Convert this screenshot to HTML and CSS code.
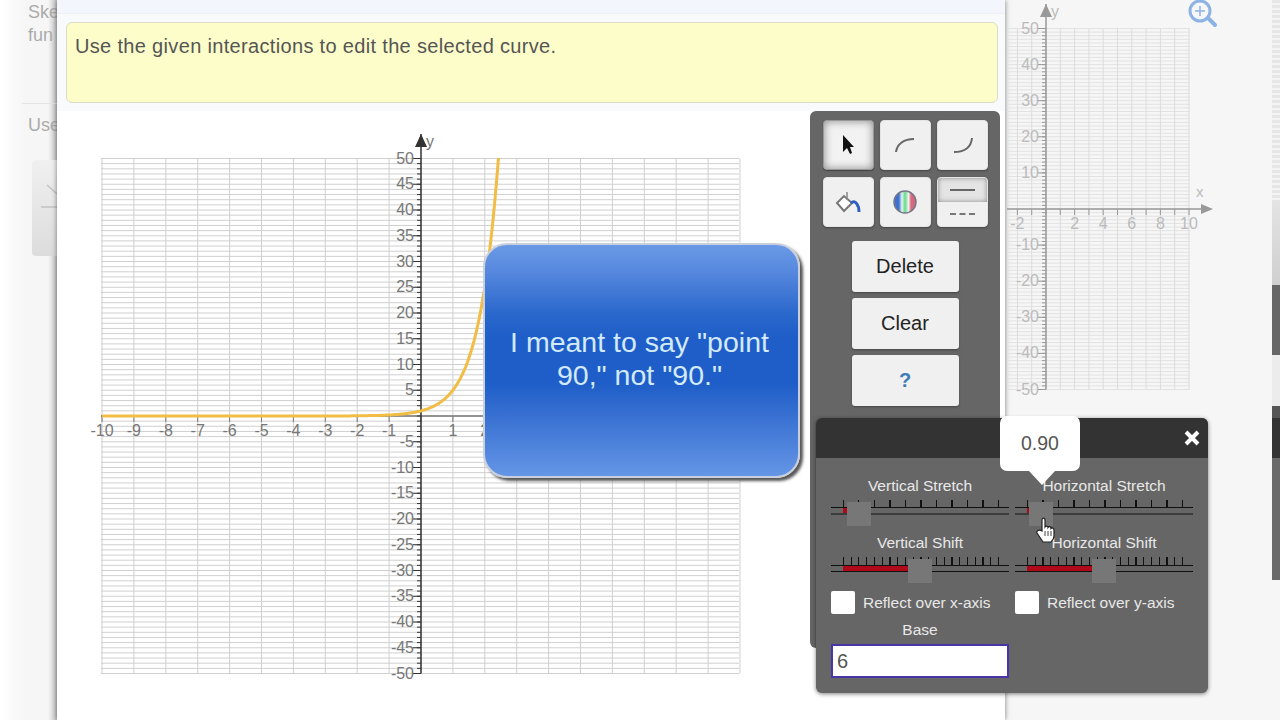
FILE: index.html
```html
<html>
    <head>
        <meta charset="utf-8">
        <link rel="stylesheet" href="styles.css">
    </head>
    <body>
        <div class="page">
            <div class="left_col">
                <p class="left_txt">Ske<br>fun</p>
                <div class="left_rule"></div>
                <p class="left_use">Use</p>
                <div class="left_box">
                    <svg width="25" height="96" viewBox="0 0 25 96"><path d="M15 25 L25 34 M9 47 H25" stroke="#c4c4c4" stroke-width="1.5" fill="none"/></svg>
                </div>
            </div>

            <div class="modal">
                <div class="modal_head">
                    <div class="notice">Use the given interactions to edit the selected curve.</div>
                </div>
                <div class="workspace">
                    <svg id="mainGraph" class="graph" width="753" height="609" viewBox="57 111 753 609"></svg>
                    <div class="toolbar">
                        <div class="tools">
                            <div class="tool selected">
                                <svg width="49" height="48" viewBox="0 0 49 48"><path d="M19 14 L19 31 L23 27 L26 33 L28 32 L26 26 L30 26 Z" fill="#111"/></svg>
                            </div>
                            <div class="tool">
                                <svg width="49" height="48" viewBox="0 0 49 48"><path d="M15 31 C16 23 23 18 33 18" fill="none" stroke="#666" stroke-width="2"/></svg>
                            </div>
                            <div class="tool">
                                <svg width="49" height="48" viewBox="0 0 49 48"><path d="M16 31 C26 31 33 27 34 17" fill="none" stroke="#666" stroke-width="2"/></svg>
                            </div>
                            <div class="tool">
                                <svg width="49" height="48" viewBox="0 0 49 48">
                                    <path d="M13 25 L20 18 L28 25 L20 33 Z" fill="#fff" stroke="#777" stroke-width="2"/>
                                    <path d="M23 14 L23 22" stroke="#888" stroke-width="1.5"/>
                                    <path d="M27 25 C31 21 35 27 35 34" fill="none" stroke="#2f5fc0" stroke-width="3"/>
                                </svg>
                            </div>
                            <div class="tool">
                                <svg width="49" height="48" viewBox="0 0 49 48">
                                    <defs>
                                        <linearGradient id="wheel">
                                            <stop offset="0.22" stop-color="#3f6fd0"/>
                                            <stop offset="0.36" stop-color="#e8f2f0"/>
                                            <stop offset="0.5" stop-color="#62dc8a"/>
                                            <stop offset="0.66" stop-color="#eef2ee"/>
                                            <stop offset="0.78" stop-color="#d8667c"/>
                                        </linearGradient>
                                    </defs>
                                    <circle cx="24" cy="24" r="11" fill="url(#wheel)" stroke="#778" stroke-width="1.5"/>
                                </svg>
                            </div>
                            <div class="tool line_tool">
                                <div class="line_solid"><span></span></div>
                                <div class="line_dash"><span></span></div>
                            </div>
                        </div>
                        <div class="actions">
                            <div class="action">Delete</div>
                            <div class="action">Clear</div>
                            <div class="action help">?</div>
                        </div>
                    </div>
                </div>
            </div>

            <div class="right_col">
                <svg id="sideGraph" class="side_graph" width="267" height="400" viewBox="1005 0 267 400"></svg>
                <svg class="zoom_icon" width="32" height="30" viewBox="0 0 32 30">
                    <circle cx="13" cy="11" r="10" fill="#f5f7fb" stroke="#8db2e4" stroke-width="3"/>
                    <path d="M8 11 H18 M13 6 V16" stroke="#8db2e4" stroke-width="1.5"/>
                    <path d="M21 18 L28 25" stroke="#8db2e4" stroke-width="4" stroke-linecap="round"/>
                </svg>
                <div class="edge_strip">
                    <div class="edge_a"></div>
                    <div class="edge_b"></div>
                    <div class="edge_c"></div>
                    <div class="edge_d"></div>
                    <div class="edge_e"></div>
                    <div class="edge_f"></div>
                </div>
            </div>

            <div class="callout">I meant to say "point 90," not "90."</div>

            <div class="panel">
                <div class="panel_head">
                    <svg class="panel_close" width="18" height="18" viewBox="0 0 18 18"><path d="M3 3 L15 15 M15 3 L3 15" stroke="#fff" stroke-width="4"/></svg>
                </div>
                <div class="panel_body">
                    <div class="ctrl">
                        <div class="ctrl_label">Vertical Stretch</div>
                        <div class="slider">
                            <div class="ticks"></div>
                            <div class="track soft"><div class="fill" style="width:4px"></div></div>
                            <div class="thumb" style="left:16px"></div>
                        </div>
                    </div>
                    <div class="ctrl">
                        <div class="ctrl_label">Horizontal Stretch</div>
                        <div class="slider">
                            <div class="ticks"></div>
                            <div class="track soft"><div class="fill" style="width:4px"></div></div>
                            <div class="thumb" style="left:14px"></div>
                        </div>
                    </div>
                    <div class="ctrl">
                        <div class="ctrl_label">Vertical Shift</div>
                        <div class="slider">
                            <div class="ticks fine"></div>
                            <div class="track"><div class="fill" style="width:65px"></div></div>
                            <div class="thumb" style="left:77px"></div>
                        </div>
                    </div>
                    <div class="ctrl">
                        <div class="ctrl_label">Horizontal Shift</div>
                        <div class="slider">
                            <div class="ticks fine"></div>
                            <div class="track"><div class="fill" style="width:65px"></div></div>
                            <div class="thumb" style="left:77px"></div>
                        </div>
                    </div>
                    <div class="check"><span class="box"></span>Reflect over x-axis</div>
                    <div class="check"><span class="box"></span>Reflect over y-axis</div>
                    <div class="base">
                        <div class="base_label">Base</div>
                        <div class="base_input">6</div>
                    </div>
                </div>
                <div class="tip">0.90</div>
                <svg class="hand" width="24" height="28" viewBox="0 0 24 28">
                    <path d="M7 15 L7 4 C7 1.5 10 1.5 10 4 L10 11 C11 9.5 13 10 13 11.5 C14 10 16 10.5 16 12.5 C17 11.5 19 12 19 14 L19 20 C19 23 17 25 16 26 L8 26 C6 23 4 20 2 17 C1 15 4 13 7 15 Z" fill="#fff" stroke="#222" stroke-width="1.2"/>
                    <path d="M10 15 V20 M13 15 V20 M16 15 V20" stroke="#444" stroke-width="1"/>
                </svg>
            </div>
        </div>
        <script src="graph.js"></script>
    </body>
</html>
```

FILE: styles.css
```css
html, body{
    margin: 0;
    padding: 0;
}
body{
    font-family: "Liberation Sans", Arial, sans-serif;
    overflow: hidden;
}
.page{
    position: relative;
    display: flex;
    width: 1280px;
    height: 720px;
    overflow: hidden;
    background: #f6f6f6;
}

/* page behind the dialog */
.left_col{
    width: 57px;
    flex-shrink: 0;
    overflow: hidden;
    box-sizing: border-box;
    padding-top: 1px;
    background: linear-gradient(90deg, #fff 0, #f6f6f6 25px, #f6f6f6 48px, #c4c4c4 57px);
    color: #ababab;
    font-size: 18px;
    white-space: nowrap;
}
.left_txt{
    margin: 0 0 0 28px;
    line-height: 23px;
}
.left_rule{
    margin: 56px 0 0 22px;
    border-top: 1px solid #e4e4e4;
}
.left_use{
    margin: 10px 0 0 28px;
    line-height: 22px;
}
.left_box{
    width: 40px;
    height: 96px;
    margin: 24px 0 0 32px;
    background: linear-gradient(180deg, #f0f0f0, #dcdcdc);
    border-radius: 4px;
}
.left_box svg{
    display: block;
}

/* dialog */
.modal{
    position: relative;
    width: 948px;
    flex-shrink: 0;
    background: #fff;
    box-shadow: 0 0 5px rgba(0,0,0,.5);
}
.modal_head{
    padding: 22px 7px 8px 9px;
    background: linear-gradient(180deg, #f3f6fc 0, #f3f6fc 13px, #e3e7f0 13px, #f9fafc 14px);
}
.notice{
    height: 81px;
    box-sizing: border-box;
    padding: 12px 8px;
    background: #fdfdc9;
    border: 1px solid #dcdcc8;
    border-radius: 6px;
    color: #555;
    font-size: 20px;
    letter-spacing: .33px;
    line-height: 22px;
}
.workspace{
    display: flex;
}
.graph{
    flex-shrink: 0;
}
.graph text, .side_graph text{
    font-family: "Liberation Sans", Arial, sans-serif;
}

/* toolbar */
.toolbar{
    width: 190px;
    height: 537px;
    box-sizing: border-box;
    padding: 9px 13px;
    background: #666;
    border-radius: 6px;
}
.tools{
    display: grid;
    grid-template-columns: repeat(3, 51px);
    grid-auto-rows: 50px;
    column-gap: 6px;
    row-gap: 7px;
}
.tool{
    box-sizing: border-box;
    border: 1px solid #e4e4e4;
    border-radius: 4px;
    background: #f0f0f0;
    box-shadow: 0 1px 2px #444;
    overflow: hidden;
}
.tool svg{
    display: block;
}
.tool.selected{
    border-color: #999;
    background: #f2f2f2;
    box-shadow: inset 0 0 8px #888, 0 1px 1px #444;
}
.line_tool{
    display: flex;
    flex-direction: column;
}
.line_solid{
    display: flex;
    align-items: center;
    justify-content: center;
    height: 24px;
    background: #e4e4e4;
    box-shadow: inset 0 0 5px #888;
}
.line_solid span{
    width: 25px;
    border-top: 2px solid #666;
}
.line_dash{
    display: flex;
    flex: 1;
    align-items: center;
    justify-content: center;
}
.line_dash span{
    width: 25px;
    border-top: 2px dashed #777;
}
.actions{
    display: flex;
    flex-direction: column;
    align-items: center;
    gap: 6px;
    margin-top: 14px;
}
.action{
    width: 107px;
    height: 51px;
    line-height: 50px;
    text-align: center;
    background: #f0f0f0;
    border-radius: 3px;
    box-shadow: 0 1px 2px #444;
    color: #222;
    font-size: 20px;
}
.action.help{
    color: #3f7db8;
    font-weight: 700;
}

/* page to the right of the dialog */
.right_col{
    position: relative;
    flex: 1;
    display: flex;
    justify-content: space-between;
}
.side_graph{
    flex-shrink: 0;
}
.zoom_icon{
    position: absolute;
    left: 182px;
    top: 0;
}
.edge_strip{
    flex: 1;
    display: flex;
    flex-direction: column;
}
.edge_a{
    height: 200px;
    background: repeating-linear-gradient(180deg, #e6e6e6 0 3px, #f4f4f4 3px 5px);
}
.edge_b{
    height: 85px;
    background: linear-gradient(180deg, #e4e4e4, #cfcfcf);
}
.edge_c{
    height: 70px;
    background: #666;
}
.edge_d{
    height: 51px;
    background: #ececec;
}
.edge_e{
    height: 52px;
    border-top: 12px solid #555;
    box-sizing: border-box;
    background: #333;
}
.edge_f{
    height: 122px;
    background: #6a6a6a;
}

/* message bubble */
.callout{
    position: absolute;
    left: 483px;
    top: 243px;
    display: flex;
    align-items: center;
    justify-content: center;
    width: 317px;
    height: 235px;
    box-sizing: border-box;
    padding: 0 24px 4px 20px;
    border: 2px solid #c9cfdc;
    border-radius: 24px;
    background: linear-gradient(180deg, #6a9ae6 0, #5587dd 12%, #2a68cc 30%, #1f5ec8 40%, #1f5ec8 60%, #3a72d2 75%, #6596e6 100%);
    box-shadow: 3px 3px 3px #555;
    color: #d3eafb;
    font-size: 28.5px;
    line-height: 33px;
    text-align: center;
}

/* transform panel */
.panel{
    position: absolute;
    left: 816px;
    top: 418px;
    width: 392px;
    height: 275px;
    background: #666;
    border-radius: 6px;
    box-shadow: 0 1px 4px rgba(0,0,0,.5);
}
.panel_head{
    display: flex;
    justify-content: flex-end;
    align-items: center;
    height: 40px;
    box-sizing: border-box;
    padding-right: 7px;
    background: #333;
    border-radius: 6px 6px 0 0;
}
.panel_body{
    display: grid;
    grid-template-columns: 178px 178px;
    column-gap: 6px;
    padding: 19px 0 0 15px;
}
.ctrl_label{
    height: 18px;
    line-height: 18px;
    text-align: center;
    color: #e8e8e8;
    font-size: 15.5px;
    white-space: nowrap;
}
.slider{
    position: relative;
    height: 39px;
}
.ticks{
    position: absolute;
    left: 12px;
    top: 5px;
    width: 156px;
    height: 8px;
    background: repeating-linear-gradient(90deg, #111 0 1px, transparent 1px 15.5px);
}
.ticks.fine{
    background: repeating-linear-gradient(90deg, #111 0 1px, transparent 1px 7.75px);
}
.track{
    position: absolute;
    left: 0;
    right: 0;
    top: 13px;
    height: 5px;
    border-bottom: 1px solid #111;
    border-top: 1px solid #111;
}
.track.soft{
    top: 12px;
    border-bottom-color: #3c3c3c;
    border-bottom-width: 2px;
}
.fill{
    height: 100%;
    margin-left: 12px;
    background: #b0091a;
}
.thumb{
    position: absolute;
    top: 7px;
    width: 24px;
    height: 24px;
    background: #777;
}
.check{
    display: flex;
    align-items: center;
    height: 23px;
    color: #e8e8e8;
    font-size: 15.5px;
    white-space: nowrap;
}
.box{
    width: 24px;
    height: 23px;
    margin-right: 8px;
    background: #fff;
    border-radius: 2px;
}
.base{
    margin-top: 7px;
}
.base_label{
    height: 18px;
    line-height: 18px;
    text-align: center;
    color: #e8e8e8;
    font-size: 15.5px;
}
.base_input{
    height: 34px;
    box-sizing: border-box;
    margin-top: 5px;
    padding-left: 4px;
    line-height: 30px;
    background: #fff;
    border: 2px solid #4a35a8;
    color: #555;
    font-size: 20px;
}
.tip{
    position: absolute;
    left: 184px;
    top: -2px;
    width: 80px;
    height: 55px;
    line-height: 55px;
    text-align: center;
    background: #fff;
    border-radius: 7px;
    color: #555;
    font-size: 19.5px;
}
.tip::after{
    content: '';
    position: absolute;
    left: 29px;
    top: 55px;
    border-left: 13px solid transparent;
    border-right: 13px solid transparent;
    border-top: 14px solid #fff;
}
.panel_close{
    display: block;
}
.hand{
    position: absolute;
    left: 219px;
    top: 98px;
}
```

FILE: graph.js
```js
// draws the coordinate grids, all coordinates are page pixels (see the viewBox)
var NS = 'http://www.w3.org/2000/svg';

function add(svg, tag, attrs, txt) {
    var el = document.createElementNS(NS, tag);
    for (var k in attrs) el.setAttribute(k, attrs[k]);
    if (txt !== undefined) el.textContent = txt;
    svg.appendChild(el);
    return el;
}

function drawGraph(svg, g) {
    var px = function (x) { return g.x0 + x * g.ux; };
    var py = function (y) { return g.y0 - y * g.uy; };
    var i;

    for (i = g.ymin; i <= g.ymax; i += g.ygrid) {
        add(svg, 'line', { x1: g.left, x2: g.right, y1: py(i), y2: py(i), stroke: g.gridY, 'stroke-width': 1 });
    }
    for (i = g.xmin; i <= g.xmax; i++) {
        add(svg, 'line', { x1: px(i), x2: px(i), y1: py(g.ymax), y2: py(g.ymin), stroke: g.gridX, 'stroke-width': 1 });
    }

    // x axis
    add(svg, 'line', { x1: g.left, x2: g.xEnd, y1: g.y0, y2: g.y0, stroke: g.axisX, 'stroke-width': 1.5 });
    for (i = g.xmin; i <= g.xmax; i++) {
        add(svg, 'line', { x1: px(i), x2: px(i), y1: g.y0, y2: g.y0 + 6, stroke: g.axisX, 'stroke-width': 1 });
        if (i !== 0 && i % g.xstep === 0) {
            add(svg, 'text', { x: px(i), y: g.y0 + 20, 'text-anchor': 'middle', 'font-size': g.font, fill: g.label }, String(i));
        }
    }

    // y axis
    add(svg, 'line', { x1: g.x0, x2: g.x0, y1: g.yEnd, y2: py(g.ymin), stroke: g.axisY, 'stroke-width': 1.5 });
    add(svg, 'polygon', { points: (g.x0 - 6) + ',' + (g.yEnd + 13) + ' ' + g.x0 + ',' + g.yEnd + ' ' + (g.x0 + 6) + ',' + (g.yEnd + 13), fill: g.axisY });
    for (i = g.ymin; i <= g.ymax; i += g.ytick) {
        add(svg, 'line', { x1: g.x0 - 4, x2: g.x0, y1: py(i), y2: py(i), stroke: g.axisY, 'stroke-width': 1 });
    }
    for (i = g.ymin; i <= g.ymax; i += g.ystep) {
        if (i === 0) continue;
        add(svg, 'line', { x1: g.x0 - 8, x2: g.x0, y1: py(i), y2: py(i), stroke: g.axisY, 'stroke-width': 1 });
        add(svg, 'text', { x: g.x0 - 7, y: py(i) + 5, 'text-anchor': 'end', 'font-size': g.font, fill: g.label }, String(i));
    }
    add(svg, 'text', { x: g.x0 + 5, y: g.yEnd + 13, 'font-size': g.font, fill: g.label }, 'y');
}

var mainGraph = document.getElementById('mainGraph');
drawGraph(mainGraph, {
    x0: 421, y0: 416, ux: 31.9, uy: 5.15,
    left: 101, right: 739, xEnd: 739, yEnd: 134,
    xmin: -10, xmax: 10, ymin: -50, ymax: 50,
    xstep: 1, ystep: 5, ygrid: 1, ytick: 1,
    gridX: '#cfcfcf', gridY: '#d0d0d0', axisX: '#777', axisY: '#333',
    label: '#777', font: 16
});

// y = 6^(0.9x), the selected curve
var pts = [];
for (var x = -10; x <= 2.44; x += 0.02) {
    pts.push((421 + x * 31.9).toFixed(1) + ',' + Math.max(158, 416 - Math.pow(6, 0.9 * x) * 5.15).toFixed(1));
}
add(mainGraph, 'polyline', { points: pts.join(' '), fill: 'none', stroke: '#f2bd45', 'stroke-width': 3 });

var side = document.getElementById('sideGraph');
drawGraph(side, {
    x0: 1046, y0: 209, ux: 14.3, uy: 3.61,
    left: 1007, right: 1190, xEnd: 1205, yEnd: 4,
    xmin: -2, xmax: 10, ymin: -50, ymax: 50,
    xstep: 2, ystep: 10, ygrid: 1, ytick: 1,
    gridX: '#dcdcdc', gridY: '#e2e2e2', axisX: '#999', axisY: '#999',
    label: '#bbb', font: 16
});
add(side, 'polygon', { points: '1201,204 1213,209 1201,214', fill: '#999' });
add(side, 'text', { x: 1196, y: 197, 'font-size': 15, fill: '#bbb' }, 'x');
```
